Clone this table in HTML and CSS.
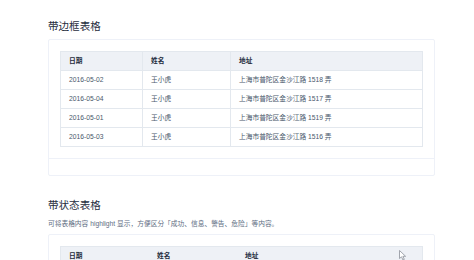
FILE: index.html
```html
<!DOCTYPE html>
<html lang="zh-CN">
<head>
<meta charset="utf-8">
<title>Table</title>
<link rel="stylesheet" href="styles.css">
</head>
<body>
<main class="page">
  <h3 class="title">带边框表格</h3>
  <section class="demo">
    <div class="source">
      <div class="table bordered">
        <div class="cell th">日期</div><div class="cell th">姓名</div><div class="cell th">地址</div>
        <div class="cell">2016-05-02</div><div class="cell">王小虎</div><div class="cell">上海市普陀区金沙江路 1518 弄</div>
        <div class="cell">2016-05-04</div><div class="cell">王小虎</div><div class="cell">上海市普陀区金沙江路 1517 弄</div>
        <div class="cell">2016-05-01</div><div class="cell">王小虎</div><div class="cell">上海市普陀区金沙江路 1519 弄</div>
        <div class="cell">2016-05-03</div><div class="cell">王小虎</div><div class="cell">上海市普陀区金沙江路 1516 弄</div>
      </div>
    </div>
    <div class="control"></div>
  </section>

  <h3 class="title second">带状态表格</h3>
  <p class="desc">可将表格内容 highlight 显示，方便区分「成功、信息、警告、危险」等内容。</p>
  <section class="demo">
    <div class="source">
      <div class="table plain">
        <div class="cell th">日期</div><div class="cell th">姓名</div><div class="cell th">地址</div>
      </div>
    </div>
  </section>
</main>
<svg class="cursor" width="8" height="11" viewBox="0 0 8 11" aria-hidden="true">
  <path d="M0.5 0.5 L0.5 8.5 L2.5 6.8 L4 10 L5.3 9.4 L3.9 6.3 L6.6 6.3 Z" fill="#ffffff" stroke="#8a8f99" stroke-width="0.8" stroke-linejoin="round"/>
</svg>
</body>
</html>
```

FILE: styles.css
```css
html, body {
  margin: 0;
  padding: 0;
  background: #ffffff;
}

body {
  font-family: "Liberation Sans", "Noto Sans CJK SC", sans-serif;
  color: #1f2d3d;
  position: relative;
  height: 260px;
  overflow: hidden;
}

.page {
  padding: 19px 0 0 48px;
  width: 387px;
}

.title {
  margin: 0 0 6px 0;
  font-size: 10.56px;
  line-height: 14px;
  font-weight: 400;
  color: #1f2d3d;
}

.title.second {
  margin-top: 22px;
  margin-bottom: 7px;
}

.desc {
  margin: 0 0 5px 0;
  font-size: 6.72px;
  line-height: 10px;
  color: #5e6d82;
  white-space: nowrap;
}

.demo {
  border: 1px solid #eef1f8;
  border-radius: 2px;
  box-sizing: border-box;
  width: 387px;
}

.source {
  padding: 11px;
}

.control {
  border-top: 1px solid #eef1f8;
  height: 16px;
}

.table {
  display: grid;
  border: 1px solid #e3e8ee;
  font-size: 6.72px;
}

.table.bordered {
  grid-template-columns: 82px 88px 1fr;
  border-bottom: 0;
  border-right: 0;
}

.table.plain {
  grid-template-columns: 88px 88px 1fr;
  border-bottom: 0;
}

.cell {
  box-sizing: border-box;
  height: 19px;
  line-height: 18px;
  padding-left: 8px;
  border-bottom: 1px solid #e3e8ee;
  white-space: nowrap;
  overflow: hidden;
  color: #48576a;
}

.bordered .cell {
  border-right: 1px solid #e3e8ee;
}

.th {
  background: #eef1f6;
  font-weight: 700;
  color: #1f2d3d;
}

.cursor {
  position: absolute;
  left: 399px;
  top: 250px;
}
```
